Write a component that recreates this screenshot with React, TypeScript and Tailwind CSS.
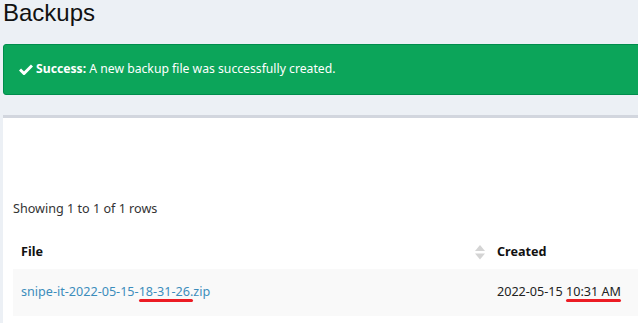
const SortIcon = () => (
  <svg width="10" height="15" viewBox="0 0 10 15" className="shrink-0">
    <path d="M5 0 L10 6 L0 6 Z" fill="#d4d4d4" />
    <path d="M0 8.5 L10 8.5 L5 14.5 Z" fill="#d4d4d4" />
  </svg>
);

const CheckIcon = () => (
  <svg width="14" height="11" viewBox="0 0 14 11" className="shrink-0">
    <path d="M1 5.5 L5 9.5 L13 1.5" fill="none" stroke="#ffffff" strokeWidth="3" />
  </svg>
);

const Marked = ({ children }: { children: string }) => (
  <span className="relative">
    {children}
    <span className="absolute left-0 right-0 top-[16px] h-[3px] rounded-full bg-[#ec1c24]" />
  </span>
);

export default function App() {
  return (
    <div
      className="h-[323px] w-[638px] overflow-hidden bg-[#ecf0f5] pl-[3px]"
      style={{ fontFamily: '"Noto Sans", "Open Sans", sans-serif' }}
    >
      <h1 className="text-[24px] leading-[26px] text-[#111]" style={{ fontFamily: '"Liberation Sans", Arial, sans-serif' }}>
        Backups
      </h1>

      <div className="mt-[18px] flex h-[51px] w-[700px] items-center gap-[3px] rounded-[3px] border border-[#008d4c] bg-[#0ca55a] pl-[15px] text-[12.2px] text-white">
        <CheckIcon />
        <span>
          <b className="font-bold">Success:</b> A new backup file was successfully created.
        </span>
      </div>

      <div className="mt-[20px] h-[300px] w-[700px] border-t-[3px] border-[#d2d6de] bg-white px-[10px] text-[12.6px] text-[#333]">
        <div className="pt-[81px] leading-[20px]">Showing 1 to 1 of 1 rows</div>

        <div className="mt-[17px]">
          <div className="flex h-[33px] items-center font-bold text-[#111]">
            <div className="flex w-[474px] items-center justify-between pl-[8px] pr-[2px]">
              <span>File</span>
              <SortIcon />
            </div>
            <div className="pl-[10px]">Created</div>
          </div>
          <div className="flex h-[47px] items-center bg-[#f9f9f9]">
            <div className="w-[474px] pl-[8px] text-[#3c8dbc]">
              snipe-it-2022-05-15-<Marked>18-31-26.</Marked>zip
            </div>
            <div className="pl-[10px] text-[#222]">
              2022-05-15 <Marked>10:31 AM</Marked>
            </div>
          </div>
        </div>
      </div>
    </div>
  );
}
